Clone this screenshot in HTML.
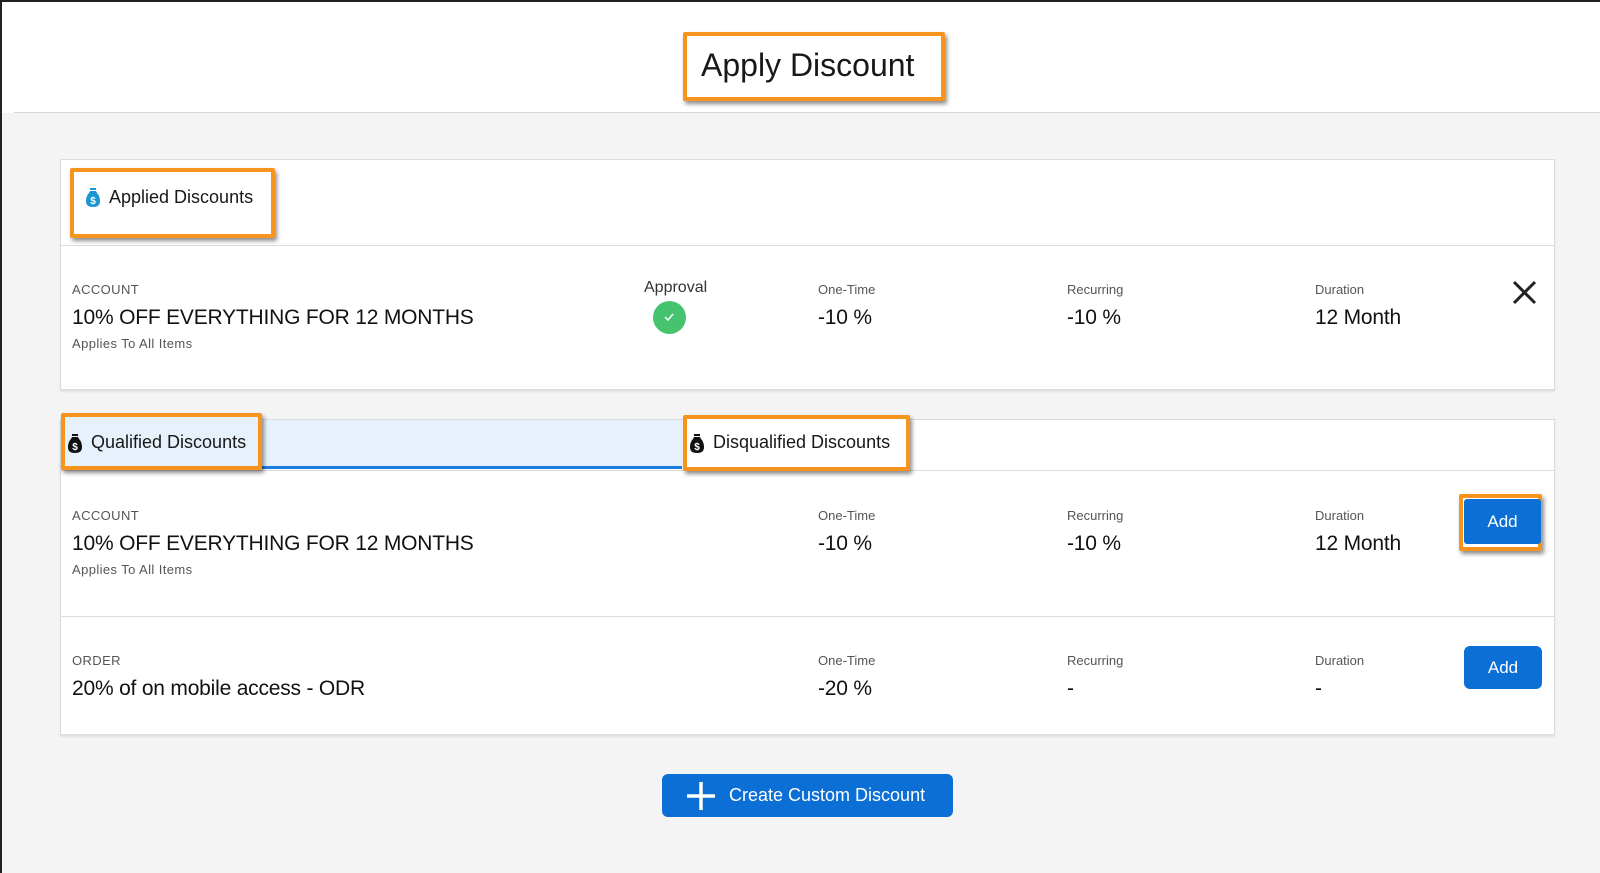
<!DOCTYPE html>
<html><head><meta charset="utf-8"><style>
*{box-sizing:border-box;margin:0;padding:0}
body{width:1600px;height:873px;overflow:hidden;background:#f4f4f4;font-family:"Liberation Sans",sans-serif;color:#181818;position:relative}
.abs{position:absolute}
.hdr{left:0;top:0;width:1600px;height:113px;background:#fff}
.bl{left:0;top:0;width:2px;height:873px;background:#222}
.bt{left:0;top:0;width:1600px;height:2px;background:#222}
.or{border:4px solid #f7941d;box-shadow:2px 3px 4px rgba(0,0,0,.45);border-radius:2px}
.panel{background:#fff;border:1px solid #dcdcdc;box-shadow:0 2px 2px rgba(0,0,0,.08)}
.lbl{font-size:13px;color:#555;white-space:nowrap}
.val{font-size:21px;color:#111;white-space:nowrap;letter-spacing:-0.2px}
.small{font-size:13px;color:#555;white-space:nowrap;letter-spacing:.4px}
.btn{background:#0b6fd6;color:#fff;border-radius:6px;font-size:17px;display:flex;align-items:center;justify-content:center}
.tt{font-size:18px;white-space:nowrap}
</style></head><body>
<div class="abs hdr"></div>
<div class="abs bt"></div>
<div class="abs bl"></div>
<div class="abs" style="left:14px;top:112px;width:1586px;height:1px;background:#d8d8d8"></div>

<div class="abs or" style="left:683px;top:32px;width:262px;height:69px;background:#fff"></div>
<div class="abs" style="left:701px;top:47px;font-size:32px;white-space:nowrap">Apply Discount</div>

<div class="abs panel" style="left:60px;top:159px;width:1495px;height:231px"></div>
<div class="abs" style="left:61px;top:245px;width:1493px;height:1px;background:#dcdcdc"></div>
<div class="abs or" style="left:70px;top:168px;width:205px;height:70px;background:#fff"></div>
<svg class="abs" style="left:86px;top:188px" width="14" height="19" viewBox="0 0 14 19"><rect x="4" y="0" width="6" height="2" fill="#1b96d3"/><path d="M4 3h6l1 2c2 2 3 5 3 8 0 4-2 6-7 6S0 17 0 13c0-3 1-6 3-8z" fill="#1b96d3"/><text x="7" y="16" font-size="10" fill="#fff" text-anchor="middle" font-family="Liberation Sans" font-weight="bold">$</text></svg>
<div class="abs tt" style="left:109px;top:187px">Applied Discounts</div>

<div class="abs small" style="left:72px;top:282px">ACCOUNT</div>
<div class="abs val" style="left:72px;top:306px">10% OFF EVERYTHING FOR 12 MONTHS</div>
<div class="abs small" style="left:72px;top:336px">Applies To All Items</div>
<div class="abs" style="left:644px;top:279px;font-size:16px;color:#333">Approval</div>
<div class="abs" style="left:653px;top:301px;width:33px;height:33px;border-radius:50%;background:#45c36f"></div>
<svg class="abs" style="left:662px;top:311px" width="14" height="12" viewBox="0 0 14 12"><path d="M3 6l3 3 5-6" stroke="#fff" stroke-width="1.5" fill="none"/></svg>
<div class="abs lbl" style="left:818px;top:282px">One-Time</div>
<div class="abs val" style="left:818px;top:306px">-10 %</div>
<div class="abs lbl" style="left:1067px;top:282px">Recurring</div>
<div class="abs val" style="left:1067px;top:306px">-10 %</div>
<div class="abs lbl" style="left:1315px;top:282px">Duration</div>
<div class="abs val" style="left:1315px;top:306px">12 Month</div>
<svg class="abs" style="left:1512px;top:280px" width="25" height="25" viewBox="0 0 25 25"><path d="M2 2L23 23M23 2L2 23" stroke="#222" stroke-width="3"/></svg>

<div class="abs panel" style="left:60px;top:419px;width:1495px;height:316px"></div>
<div class="abs" style="left:61px;top:420px;width:621px;height:48px;background:#e6f1fc"></div>
<div class="abs" style="left:61px;top:466px;width:621px;height:3px;background:#1b7fe0"></div>
<div class="abs" style="left:61px;top:470px;width:1493px;height:1px;background:#dcdcdc"></div>
<div class="abs or" style="left:61px;top:413px;width:201px;height:57px;background:#e6f1fc"></div>
<div class="abs or" style="left:683px;top:415px;width:227px;height:56px;background:#fff"></div>
<svg class="abs" style="left:68px;top:434px" width="14" height="19" viewBox="0 0 14 19"><rect x="4" y="0" width="6" height="2" fill="#111"/><path d="M4 3h6l1 2c2 2 3 5 3 8 0 4-2 6-7 6S0 17 0 13c0-3 1-6 3-8z" fill="#111"/><text x="7" y="16" font-size="10" fill="#fff" text-anchor="middle" font-family="Liberation Sans" font-weight="bold">$</text></svg>
<div class="abs tt" style="left:91px;top:432px">Qualified Discounts</div>
<svg class="abs" style="left:690px;top:434px" width="14" height="19" viewBox="0 0 14 19"><rect x="4" y="0" width="6" height="2" fill="#111"/><path d="M4 3h6l1 2c2 2 3 5 3 8 0 4-2 6-7 6S0 17 0 13c0-3 1-6 3-8z" fill="#111"/><text x="7" y="16" font-size="10" fill="#fff" text-anchor="middle" font-family="Liberation Sans" font-weight="bold">$</text></svg>
<div class="abs tt" style="left:713px;top:432px">Disqualified Discounts</div>

<div class="abs small" style="left:72px;top:508px">ACCOUNT</div>
<div class="abs val" style="left:72px;top:532px">10% OFF EVERYTHING FOR 12 MONTHS</div>
<div class="abs small" style="left:72px;top:562px">Applies To All Items</div>
<div class="abs lbl" style="left:818px;top:508px">One-Time</div>
<div class="abs val" style="left:818px;top:532px">-10 %</div>
<div class="abs lbl" style="left:1067px;top:508px">Recurring</div>
<div class="abs val" style="left:1067px;top:532px">-10 %</div>
<div class="abs lbl" style="left:1315px;top:508px">Duration</div>
<div class="abs val" style="left:1315px;top:532px">12 Month</div>
<div class="abs or" style="left:1459px;top:494px;width:83px;height:57px"></div>
<div class="abs btn" style="left:1464px;top:499px;width:77px;height:45px;border-radius:3px">Add</div>
<div class="abs" style="left:61px;top:616px;width:1493px;height:1px;background:#dcdcdc"></div>

<div class="abs small" style="left:72px;top:653px">ORDER</div>
<div class="abs val" style="left:72px;top:677px">20% of on mobile access - ODR</div>
<div class="abs lbl" style="left:818px;top:653px">One-Time</div>
<div class="abs val" style="left:818px;top:677px">-20 %</div>
<div class="abs lbl" style="left:1067px;top:653px">Recurring</div>
<div class="abs val" style="left:1067px;top:677px">-</div>
<div class="abs lbl" style="left:1315px;top:653px">Duration</div>
<div class="abs val" style="left:1315px;top:677px">-</div>
<div class="abs btn" style="left:1464px;top:646px;width:78px;height:43px">Add</div>

<div class="abs btn" style="left:662px;top:774px;width:291px;height:43px;justify-content:flex-start;font-size:18px">
<svg style="margin-left:25px;margin-right:14px" width="28" height="28" viewBox="0 0 28 28"><path d="M14 0V28M0 14H28" stroke="#fff" stroke-width="3.5"/></svg>Create Custom Discount</div>
</body></html>
